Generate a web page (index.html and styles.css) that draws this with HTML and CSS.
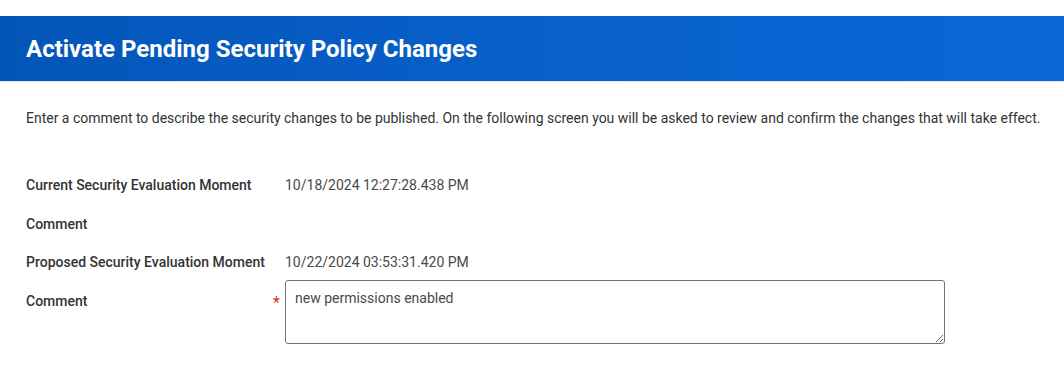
FILE: index.html
```html
<!DOCTYPE html>
<html lang="en">
<head>
  <meta charset="UTF-8">
  <meta name="viewport" content="width=device-width, initial-scale=1.0">
  <title>Activate Pending Security Policy Changes</title>
  <link rel="stylesheet" href="styles.css">
</head>
<body>

<div class="page">
  <!-- Page title band -->
  <div class="title-bar">
    <h1>Activate Pending Security Policy Changes</h1>
  </div>

  <div class="content">
    <p class="intro">Enter a comment to describe the security changes to be published. On the following screen you will be asked to review and confirm the changes that will take effect.</p>

    <div class="field-list">
      <div class="field">
        <div class="field-label">Current Security Evaluation Moment</div>
        <div class="field-value">10/18/2024 12:27:28.438 PM</div>
      </div>
      <div class="field">
        <div class="field-label">Comment</div>
        <div class="field-value"></div>
      </div>
      <div class="field">
        <div class="field-label">Proposed Security Evaluation Moment</div>
        <div class="field-value">10/22/2024 03:53:31.420 PM</div>
      </div>
      <div class="field field-input">
        <div class="field-label">Comment</div>
        <span class="required">*</span>
        <textarea class="comment-box">new permissions enabled</textarea>
      </div>
    </div>
  </div>
</div>

</body>
</html>
```

FILE: styles.css
```css
/* Base */
body {
  margin: 0;
  padding: 0;
  font-family: 'Roboto', 'Liberation Sans', sans-serif;
  background-color: #fff;
  color: #333;
}
.page {
  padding-top: 16px;
}
.title-bar {
  height: 65px;
  display: flex;
  align-items: center;
  padding: 0 26px;
  background: linear-gradient(90deg, #0455b8 0%, #0861cc 55%, #0b67d7 100%);
  border-bottom: 1px solid #dfe8f4;
}
.title-bar h1 {
  margin: 0;
  font-size: 24px;
  font-weight: 700;
  color: #fff;
}
.content {
  padding: 0 10px 0 26px;
}
.intro {
  margin: 26px 0 0;
  font-size: 14px;
  line-height: 20px;
  letter-spacing: -0.01px;
  white-space: nowrap;
  color: #333;
}
.field-list {
  margin-top: 47px;
}
.field {
  display: flex;
  align-items: flex-start;
  min-height: 38.5px;
  font-size: 14px;
  line-height: 20px;
}
.field-label {
  width: 259px;
  flex-shrink: 0;
  font-weight: 500;
  color: #333;
}
.field-value {
  color: #494949;
}
.field-input {
  margin-top: -11px;
}
.field-input .field-label {
  width: 247px;
  padding-top: 11px;
}
.required {
  width: 12px;
  color: #de2e21;
  font-size: 16px;
  padding-top: 13px;
}
.comment-box {
  width: 660px;
  height: 64px;
  box-sizing: border-box;
  padding: 8px 9px;
  border: 1px solid #6b7784;
  border-radius: 3px;
  font-family: 'Roboto', 'Liberation Sans', sans-serif;
  font-size: 14px;
  line-height: 18px;
  color: #494949;
  resize: vertical;
}
```
